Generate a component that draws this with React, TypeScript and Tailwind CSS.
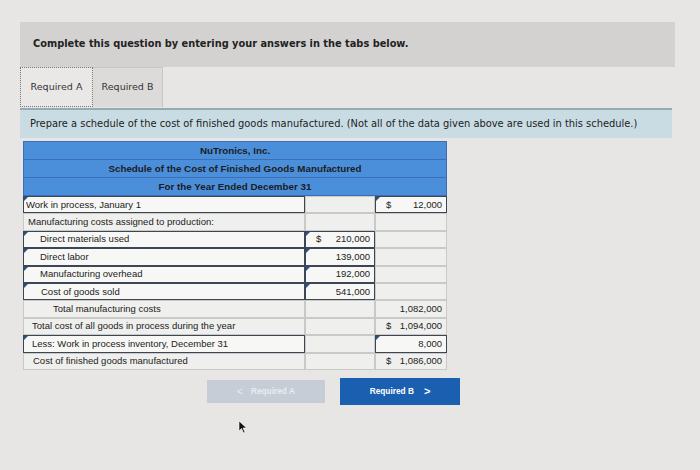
import React from "react";

type Row = {
  label: string;
  indent: string;
  labelInput?: boolean;
  mid?: string;
  midDollar?: boolean;
  midInput?: boolean;
  right?: string;
  rightDollar?: boolean;
  rightInput?: boolean;
};

const rows: Row[] = [
  { label: "Work in process, January 1", indent: "pl-[2px]", labelInput: true, right: "12,000", rightDollar: true, rightInput: true },
  { label: "Manufacturing costs assigned to production:", indent: "pl-[4px]" },
  { label: "Direct materials used", indent: "pl-[16px]", labelInput: true, mid: "210,000", midDollar: true, midInput: true },
  { label: "Direct labor", indent: "pl-[16px]", labelInput: true, mid: "139,000", midInput: true },
  { label: "Manufacturing overhead", indent: "pl-[16px]", labelInput: true, mid: "192,000", midInput: true },
  { label: "Cost of goods sold", indent: "pl-[17px]", labelInput: true, mid: "541,000", midInput: true },
  { label: "Total manufacturing costs", indent: "pl-[29px]", right: "1,082,000" },
  { label: "Total cost of all goods in process during the year", indent: "pl-[8px]", right: "1,094,000", rightDollar: true },
  { label: "Less: Work in process inventory, December 31", indent: "pl-[8px]", labelInput: true, right: "8,000", rightInput: true },
  { label: "Cost of finished goods manufactured", indent: "pl-[9px]", right: "1,086,000", rightDollar: true },
];

function Corner() {
  return (
    <span className="absolute left-0 top-0 h-0 w-0 border-t-[4px] border-r-[4px] border-t-[#2a4f8f] border-r-transparent" />
  );
}

function Cell({
  value,
  dollar,
  input,
}: {
  value?: string;
  dollar?: boolean;
  input?: boolean;
}) {
  return (
    <div
      className={
        input
          ? "relative flex items-center justify-between border border-[#3d4654] bg-[#f7f7f5] px-[4px]"
          : "relative flex items-center justify-between border border-[#c9c9c6] px-[4px]"
      }
    >
      {input && <Corner />}
      <span className="pl-[6px]">{dollar ? "$" : ""}</span>
      <span>{value}</span>
    </div>
  );
}

export default function App() {
  return (
    <div className="h-[470px] w-[700px] overflow-hidden bg-[#e7e6e4] pt-[22px] font-['Liberation_Sans',Arial,sans-serif]">
      {/* banner */}
      <div className="ml-[20px] flex h-[45px] w-[655px] items-center bg-[#d3d2d1] pl-[13px] font-['DejaVu_Sans',Verdana,sans-serif] text-[9.8px] font-bold text-[#222]">
        Complete this question by entering your answers in the tabs below.
      </div>

      {/* tabs */}
      <div className="ml-[20px] flex h-[40px] font-['DejaVu_Sans',Verdana,sans-serif] text-[9.5px] text-[#333]">
        <div className="flex w-[73px] items-center justify-center border border-dotted border-[#777] bg-[#e9e8e6]">
          Required A
        </div>
        <div className="flex w-[70px] items-center justify-center border-r border-t border-[#c6c6c4] bg-[#dcdbda]">
          Required B
        </div>
      </div>

      {/* instructions */}
      <div className="ml-[20px] mt-[1px] flex h-[30px] w-[652px] items-center border-t-2 border-[#97a9b1] bg-[#c9dce4] pl-[10px] font-['DejaVu_Sans',Verdana,sans-serif] text-[9.9px] text-[#222]">
        Prepare a schedule of the cost of finished goods manufactured. (Not all of the data given above are used in this schedule.)
      </div>

      {/* schedule */}
      <div className="ml-[23px] mt-[3px] w-[424px] text-[9.5px] text-[#222]">
        <div className="border border-[#3a6fb6] bg-[#4b8fdb] text-center text-[9.8px] font-bold text-[#1c1c1c]">
          <div className="h-[18px] border-b border-[#3a6fb6] leading-[18px]">NuTronics, Inc.</div>
          <div className="h-[18px] border-b border-[#3a6fb6] leading-[18px]">Schedule of the Cost of Finished Goods Manufactured</div>
          <div className="h-[17px] leading-[17px]">For the Year Ended December 31</div>
        </div>
        <div className="grid grid-cols-[282px_70px_72px] auto-rows-[17.4px] bg-[#efefed]">
          {rows.map((r) => (
            <React.Fragment key={r.label}>
              <div
                className={
                  r.labelInput
                    ? `relative flex items-center border border-[#3d4654] bg-[#f7f7f5] ${r.indent}`
                    : `relative flex items-center border border-[#c9c9c6] ${r.indent}`
                }
              >
                {r.labelInput && <Corner />}
                {r.label}
              </div>
              <Cell value={r.mid} dollar={r.midDollar} input={r.midInput} />
              <Cell value={r.right} dollar={r.rightDollar} input={r.rightInput} />
            </React.Fragment>
          ))}
        </div>
      </div>

      {/* nav buttons */}
      <div className="ml-[207px] mt-[10px] flex gap-[15px] text-[8.3px] font-bold text-white">
        <div className="flex h-[23px] w-[118px] items-center justify-center gap-[8px] bg-[#c6cdd6] text-[#e8ecf1]">
          <span className="text-[10px] font-normal">&lt;</span>
          <span>Required A</span>
        </div>
        <div className="-mt-[2px] flex h-[27px] w-[120px] items-center justify-center gap-[10px] bg-[#1b5fb0]">
          <span>Required B</span>
          <span className="text-[11px]">&gt;</span>
        </div>
      </div>

      {/* pointer */}
      <svg className="ml-[238px] mt-[15px]" width="10" height="14" viewBox="0 0 10 14">
        <path d="M1 1 L1 11 L3.5 8.5 L5.5 13 L7 12.3 L5 8 L8.5 8 Z" fill="#111" stroke="#fff" strokeWidth="0.6" />
      </svg>
    </div>
  );
}
